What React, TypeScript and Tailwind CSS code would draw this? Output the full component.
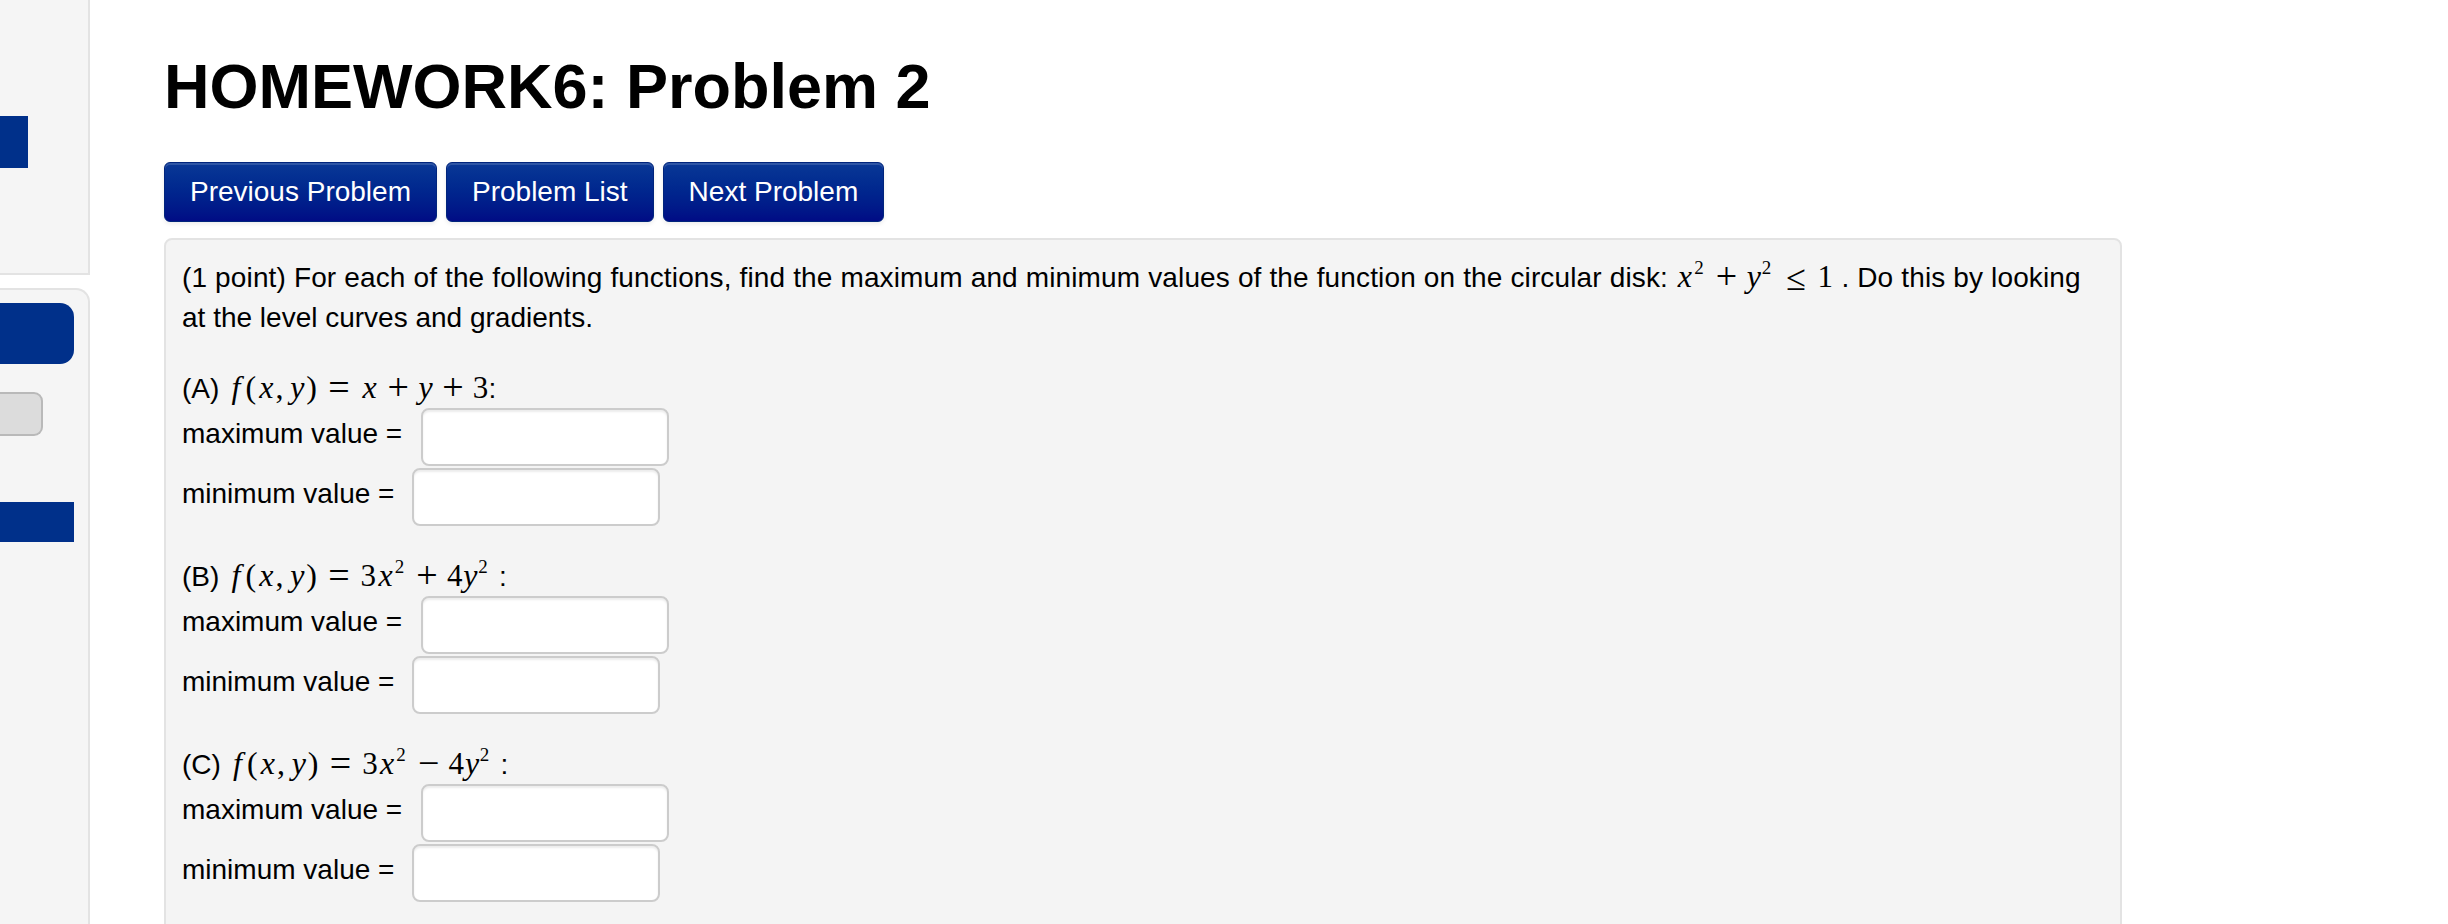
import React from "react";

const G = ({ c, cls }: { c: string; cls: string }) => (
  <span className={"inline-block font-['Liberation_Serif','Times_New_Roman',serif] leading-none " + cls}>{c}</span>
);

const FxyEq = () => (
  <>
    <G c="f" cls="w-[17.6px] text-center text-[32px] italic" />
    <G c="(" cls="w-[12.4px] text-center text-[32px]" />
    <G c="x" cls="w-[18.3px] text-center text-[32px] italic" />
    <G c="," cls="w-[14.2px] text-left text-[32px]" />
    <G c="y" cls="w-[15.7px] text-center text-[32px] italic" />
    <G c=")" cls="w-[12.4px] text-center text-[32px]" />
    <G c="=" cls="w-[42.7px] text-center text-[38px] align-[-2px]" />
  </>
);

const Row = ({ label, gap, first }: { label: string; gap: string; first?: boolean }) => (
  <div className={"flex h-[58px] " + (first ? "" : "mt-[2px]")}>
    <span className="pt-[6px] leading-[40px]">{label}</span>
    <input
      type="text"
      className={
        "h-[58px] w-[248px] rounded-[8px] border-2 border-[#cccccc] bg-white shadow-[inset_0_2px_2px_rgba(0,0,0,0.075)] outline-none " +
        gap
      }
    />
  </div>
);

export default function App() {
  return (
    <div className="flex h-[924px] overflow-hidden bg-white font-['Liberation_Sans',Arial,sans-serif] text-black">
      <aside className="flex w-[90px] shrink-0 flex-col">
        <div className="h-[275px] border-r-2 border-b-2 border-[#e3e3e3] bg-[#f5f5f5] pt-[116px]">
          <div className="h-[52px] w-[28px] bg-[#00308a]" />
        </div>
        <div className="mt-[13px] flex-1 rounded-tr-[14px] border-t-2 border-r-2 border-[#e3e3e3] bg-[#f5f5f5] pt-[13px]">
          <div className="h-[61px] w-[74px] rounded-r-[14px] bg-[#00308a]" />
          <div className="mt-[28px] h-[44px] w-[43px] rounded-r-[9px] border-2 border-l-0 border-[#b9b9b9] bg-[#dcdcdc]" />
          <div className="mt-[66px] h-[40px] w-[74px] bg-[#00308a]" />
        </div>
      </aside>

      <main className="ml-[74px] w-[1958px] shrink-0">
        <h1 className="pt-[51px] text-[63px] font-bold leading-[70px]">HOMEWORK6: Problem 2</h1>

        <div className="mt-[41px] flex gap-[9px]">
          {["Previous Problem", "Problem List", "Next Problem"].map((t) => (
            <button
              key={t}
              className="h-[60px] rounded-[6px] border border-[#00247c] bg-linear-to-b from-[#0a3896] to-[#000b85] px-[25px] text-[28px] leading-none text-white shadow-[inset_0_2px_0_rgba(255,255,255,0.15),0_2px_4px_rgba(0,0,0,0.08)]"
            >
              {t}
            </button>
          ))}
        </div>

        <div className="mt-[16px] rounded-[8px] border-2 border-[#e3e3e3] bg-[#f4f4f4] pl-[16px] pr-[18px] pt-[17px] pb-[60px] text-[28px] leading-[40px]">
          <p>
            <span className="whitespace-nowrap tracking-[0.14px]">
              (1 point) For each of the following functions, find the maximum and minimum values of the function on the circular disk:{" "}
              <G c="x" cls="w-[18.3px] text-center text-[32px] italic" />
              <G c="2" cls="w-[12.9px] text-left text-[19px] align-[13px]" />
              <G c="+" cls="w-[39.1px] text-center text-[38px] align-[-2px]" />
              <G c="y" cls="w-[15.7px] text-center text-[32px] italic" />
              <G c="2" cls="w-[12.9px] text-left text-[19px] align-[13px]" />
              <G c="≤" cls="w-[42.7px] text-center text-[36px] align-[-3px]" />
              <G c="1" cls="w-[16px] text-center text-[31px]" />
              <span className="ml-[8px]">. Do this by looking</span>
            </span>
            <br />
            at the level curves and gradients.
          </p>

          <div className="mt-[30px] h-[40px] whitespace-nowrap">
            (A) <FxyEq />
            <G c="x" cls="w-[18.3px] text-center text-[32px] italic" />
            <G c="+" cls="w-[39.1px] text-center text-[38px] align-[-2px]" />
            <G c="y" cls="w-[15.7px] text-center text-[32px] italic" />
            <G c="+" cls="w-[39.1px] text-center text-[38px] align-[-2px]" />
            <G c="3" cls="w-[16px] text-center text-[31px]" />
            <span>:</span>
          </div>
          <Row label="maximum value =" gap="ml-[19px]" first />
          <Row label="minimum value =" gap="ml-[18px]" />

          <div className="mt-[30px] h-[40px] whitespace-nowrap">
            (B) <FxyEq />
            <G c="3" cls="w-[16px] text-center text-[31px]" />
            <G c="x" cls="w-[18.3px] text-center text-[32px] italic" />
            <G c="2" cls="w-[12.9px] text-left text-[19px] align-[13px]" />
            <G c="+" cls="w-[39.1px] text-center text-[38px] align-[-2px]" />
            <G c="4" cls="w-[16px] text-center text-[31px]" />
            <G c="y" cls="w-[15.7px] text-center text-[32px] italic" />
            <G c="2" cls="w-[12.9px] text-left text-[19px] align-[13px]" /> :
          </div>
          <Row label="maximum value =" gap="ml-[19px]" first />
          <Row label="minimum value =" gap="ml-[18px]" />

          <div className="mt-[30px] h-[40px] whitespace-nowrap">
            (C) <FxyEq />
            <G c="3" cls="w-[16px] text-center text-[31px]" />
            <G c="x" cls="w-[18.3px] text-center text-[32px] italic" />
            <G c="2" cls="w-[12.9px] text-left text-[19px] align-[13px]" />
            <G c="−" cls="w-[39.1px] text-center text-[38px] align-[-2px]" />
            <G c="4" cls="w-[16px] text-center text-[31px]" />
            <G c="y" cls="w-[15.7px] text-center text-[32px] italic" />
            <G c="2" cls="w-[12.9px] text-left text-[19px] align-[13px]" /> :
          </div>
          <Row label="maximum value =" gap="ml-[19px]" first />
          <Row label="minimum value =" gap="ml-[18px]" />
        </div>
      </main>
    </div>
  );
}
